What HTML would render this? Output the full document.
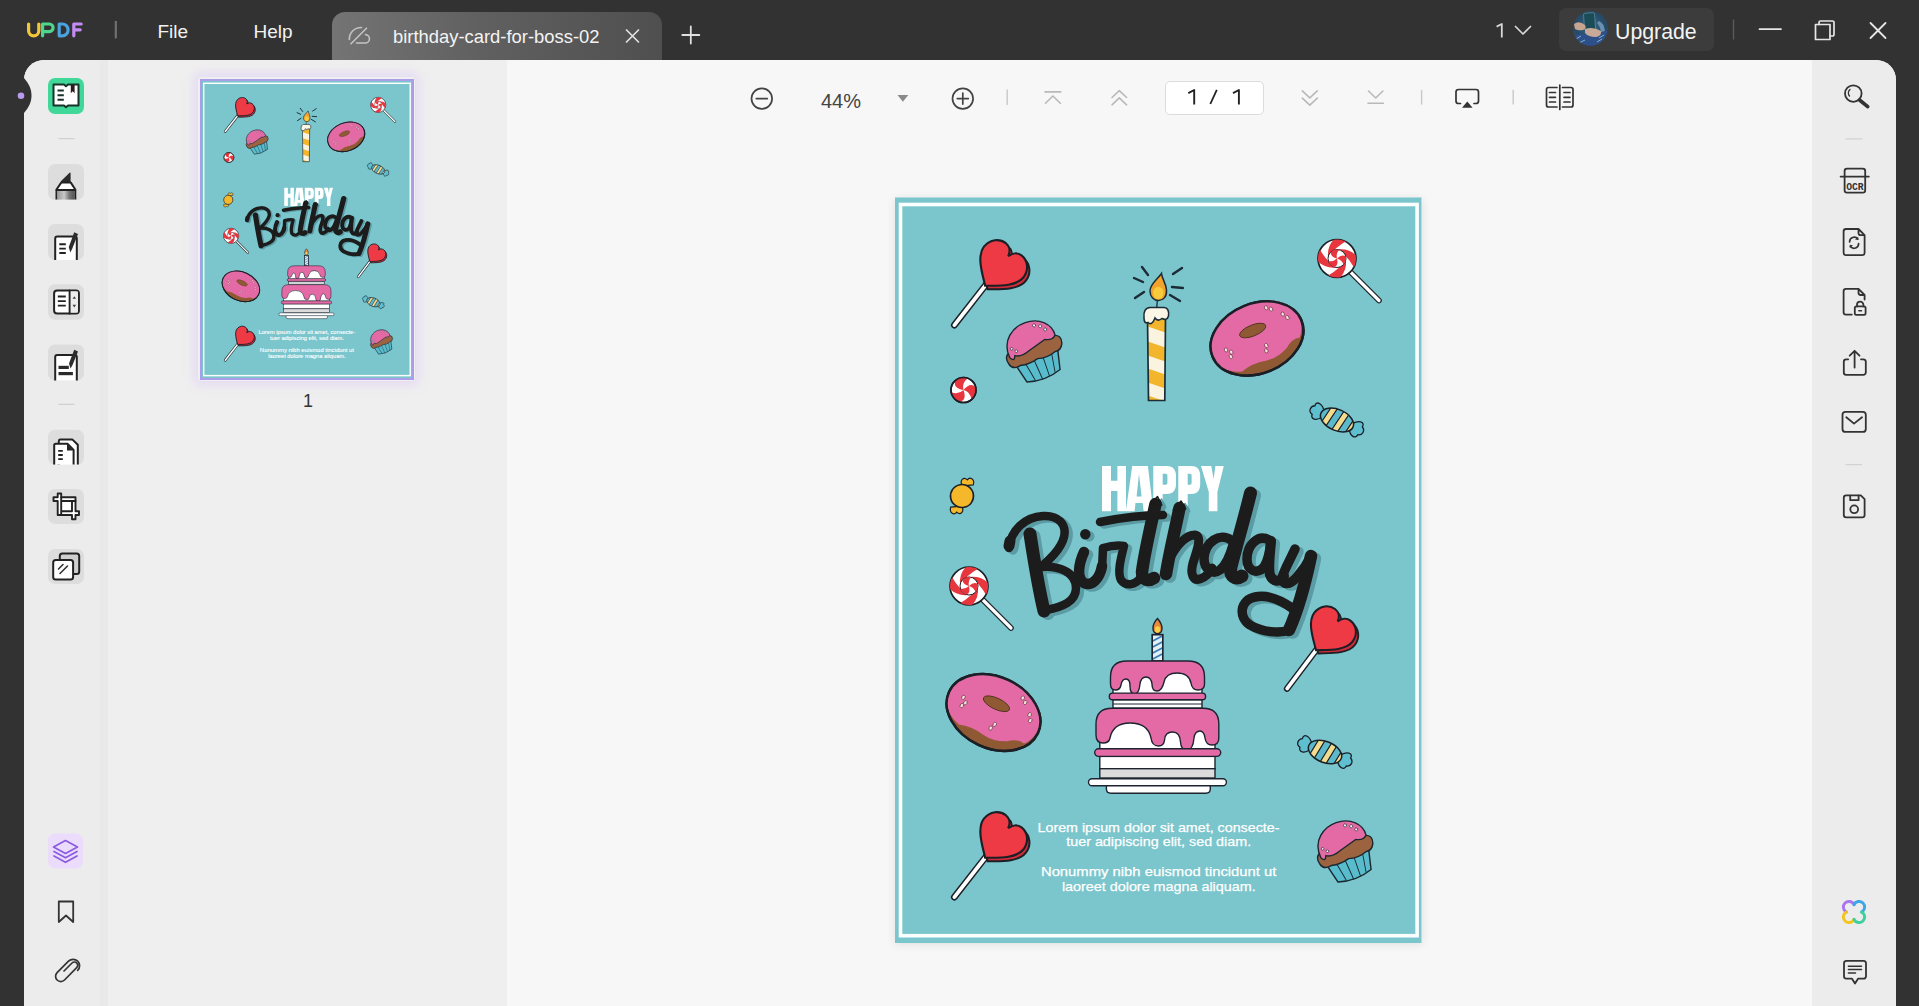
<!DOCTYPE html>
<html><head><meta charset="utf-8">
<style>
*{margin:0;padding:0;box-sizing:border-box}
html,body{width:1919px;height:1006px;overflow:hidden;background:#323232;font-family:"Liberation Sans",sans-serif;position:relative}
.abs{position:absolute}
.t{position:absolute;white-space:nowrap;line-height:1}
#panel{position:absolute;left:24px;top:60px;width:1872px;height:946px;background:#f7f7f7;border-radius:20px 20px 0 0;overflow:hidden}
#lside{position:absolute;left:0;top:0;width:76px;height:946px;background:#ececec}
#lstrip{position:absolute;left:76px;top:0;width:8px;height:946px;background:#e9e9e9}
#thumbs{position:absolute;left:84px;top:0;width:399px;height:946px;background:#efefef}
#rside{position:absolute;left:1788px;top:0;width:84px;height:946px;background:#ececec}
</style></head><body>
<svg width="0" height="0" style="position:absolute">
<defs>
<symbol id="heart" overflow="visible">
  <line x1="0" y1="15" x2="0" y2="58" stroke="#1b1f26" stroke-width="5.4" stroke-linecap="round"/>
  <line x1="0" y1="15" x2="0" y2="58" stroke="#fff" stroke-width="3" stroke-linecap="round"/>
  <path transform="translate(3.2,1)" d="M0,18 C-6,13 -20,4 -20,-6 C-20,-14 -14,-19 -8,-19 C-4,-19 -1,-16 0,-12 C1,-16 4,-19 8,-19 C14,-19 20,-14 20,-6 C20,4 6,13 0,18 Z" fill="#cf2d3a" stroke="#1b1f26" stroke-width="1.6"/>
  <path d="M0,18 C-6,13 -20,4 -20,-6 C-20,-14 -14,-19 -8,-19 C-4,-19 -1,-16 0,-12 C1,-16 4,-19 8,-19 C14,-19 20,-14 20,-6 C20,4 6,13 0,18 Z" fill="#ee3a45" stroke="#1b1f26" stroke-width="1.7"/>
</symbol>
<symbol id="swirl" overflow="visible">
  <line x1="12" y1="12" x2="42" y2="42" stroke="#1b1f26" stroke-width="5.6" stroke-linecap="round"/>
  <line x1="12" y1="12" x2="42" y2="42" stroke="#fff" stroke-width="3.2" stroke-linecap="round"/>
  <circle r="19" fill="#fff" stroke="#1b1f26" stroke-width="1.7"/>
  <g fill="#e8363f">
   <path id="sw1" d="M1,-9 Q12,-10 18.7,-3.3 A19,19 0 0 1 16.9,8.7 Q11,-2 1,-9 Z"/>
   <use href="#sw1" transform="rotate(90)"/><use href="#sw1" transform="rotate(180)"/><use href="#sw1" transform="rotate(270)"/>
  </g>
  <circle r="9" fill="#fff" stroke="#1b1f26" stroke-width="1"/>
  <g fill="#e8363f">
   <path id="sw2" d="M0,0 Q5,-5 8.8,-2 A9,9 0 0 1 6.5,6.2 Q5,1.5 0,0 Z"/>
   <use href="#sw2" transform="rotate(120)"/><use href="#sw2" transform="rotate(240)"/>
  </g>
</symbol>
<symbol id="mint" overflow="visible">
  <circle r="12.5" fill="#fff" stroke="#1b1f26" stroke-width="1.6"/>
  <g fill="#e8363f">
   <path id="mw" d="M0,0 Q8,-9 12.5,-1.5 A12.5,12.5 0 0 1 8,9.6 Q7,2 0,0 Z"/>
   <use href="#mw" transform="rotate(120)"/><use href="#mw" transform="rotate(240)"/>
  </g>
  <circle r="12.5" fill="none" stroke="#1b1f26" stroke-width="1.6"/>
</symbol>
<symbol id="candy" overflow="visible">
  <clipPath id="cclip"><ellipse rx="17.5" ry="10.5"/></clipPath>
  <path d="M-15,-2 C-19,-9 -27,-10 -26,-4 C-30,-2 -30,4 -25,5 C-25,10 -18,10 -15,3 Z" fill="#5dbfd0" stroke="#1b1f26" stroke-width="1.3"/>
  <path d="M15,-2 C19,-9 27,-10 26,-4 C30,-2 30,4 25,5 C25,10 18,10 15,3 Z" fill="#5dbfd0" stroke="#1b1f26" stroke-width="1.3"/>
  <ellipse rx="17.5" ry="10.5" fill="#f4dc8e"/>
  <g clip-path="url(#cclip)" fill="#5cb9cc" stroke="#1b1f26" stroke-width="1.2">
   <path d="M-16,-12 L-10,-12 L-14,12 L-20,12 Z"/>
   <path d="M-4,-12 L3,-12 L-1,12 L-8,12 Z"/>
   <path d="M9,-12 L16,-12 L12,12 L5,12 Z"/>
  </g>
  <ellipse rx="17.5" ry="10.5" fill="none" stroke="#1b1f26" stroke-width="1.5"/>
</symbol>
<symbol id="cupcake" overflow="visible">
  <path d="M-24,6 L25,5 L20,28 Q1,35 -18,29 Z" fill="#58bccd" stroke="#1b2830" stroke-width="1.5"/>
  <path d="M-13,10 L-9,30 M-3,10 L-1,32 M7,10 L7,31 M17,9 L14,29" stroke="#1b2830" stroke-width="1" fill="none"/>
  <path d="M-30,5 Q-33,-5 -25,-7 L25,-9 Q34,-7 31,2 Q28,9 21,8 Q11,12 1,9 Q-9,12 -19,10 Q-28,12 -30,5 Z" fill="#9b6340" stroke="#1b2830" stroke-width="1.5"/>
  <path d="M-27,-2 C-29,-22 -13,-32 1,-32 C17,-32 28,-21 27,-9 Q23,-4 15,-8 Q5,-5 -5,-2 Q-15,2 -21,-2 Q-24,5 -27,-2 Z" fill="#e46aa6" stroke="#1b2830" stroke-width="1.5"/>
  <g fill="#fff" stroke="#1b2830" stroke-width="0.7"><circle cx="9" cy="-26" r="1.6"/><circle cx="15" cy="-23" r="1.6"/><circle cx="19" cy="-18" r="1.6"/><circle cx="-22" cy="-10" r="1.4"/><circle cx="-18" cy="-6" r="1.4"/></g>
</symbol>
<symbol id="donut" overflow="visible">
  <ellipse rx="48" ry="35" fill="#8f5a33" stroke="#1b1f26" stroke-width="2.4"/>
  <path d="M-47,0 C-47,-26 -22,-35 2,-35 C27,-35 47,-22 47,-3 Q46,9 40,15 Q32,13 24,20 Q12,26 0,24 Q-14,21 -26,25 Q-40,21 -46,10 Z" fill="#e46aa6"/>
  <ellipse rx="48" ry="35" fill="none" stroke="#1b1f26" stroke-width="2.4"/>
  <ellipse cx="-1" cy="-9" rx="14" ry="5.5" fill="#8f5a33" stroke="#4a2d1a" stroke-width="0.8"/>
  <g fill="#f6e3d6" stroke="#5a2a40" stroke-width="0.6"><ellipse cx="-33" cy="-1" rx="1.6" ry="2.2"/><ellipse cx="-29" cy="3" rx="1.6" ry="2.2"/><ellipse cx="-31" cy="7" rx="1.6" ry="2.2"/><ellipse cx="20" cy="-25" rx="1.6" ry="2.2"/><ellipse cx="24" cy="-22" rx="1.6" ry="2.2"/><ellipse cx="33" cy="-13" rx="1.6" ry="2.2"/><ellipse cx="36" cy="-8" rx="1.6" ry="2.2"/><ellipse cx="6" cy="10" rx="1.6" ry="2.2"/><ellipse cx="4" cy="15" rx="1.6" ry="2.2"/></g>
</symbol>
<symbol id="ycandy" overflow="visible">
  <path d="M2,-10 C0,-16 5,-19 8,-15 C11,-18 16,-15 13,-9 Z" fill="#f5b82a" stroke="#1b1f26" stroke-width="1.2"/>
  <path d="M-2,10 C0,16 -5,19 -8,15 C-11,18 -16,15 -13,9 Z" fill="#f5b82a" stroke="#1b1f26" stroke-width="1.2"/>
  <circle r="11.5" fill="#f5b82a" stroke="#1b1f26" stroke-width="1.6"/>
</symbol>

  <g id="bday" fill="none" stroke-linecap="round" stroke-linejoin="round">
   <path d="M1009,548 C1011,530 1025,517 1043,516 C1058,515 1067,524 1064,537 C1061,549 1050,559 1041,567" stroke-width="8.5"/>
   <path d="M1009,546 L1010,541" stroke-width="11"/>
   <path d="M1030,534 C1034,560 1039,590 1044,611" stroke-width="13"/>
   <path d="M1041,567 C1058,565 1076,572 1076,588 C1076,602 1062,607 1046,610" stroke-width="8.5"/>
   <path d="M1084,552 C1079,563 1076,578 1084,583 C1092,587 1100,578 1102,566" stroke-width="10.5"/>
   <path d="M1102,570 L1103,548 C1110,546 1117,545 1124,546 C1121,558 1117,572 1121,580 C1126,587 1136,585 1141,577" stroke-width="8.5"/>
   <path d="M1100,522 C1120,518 1145,515 1163,515" stroke-width="8.5"/>
   <path d="M1155.5,504 C1151,525 1144,555 1142,572 C1142,580 1148,582 1154,578" stroke-width="12.5"/>
   <path d="M1149.8,506 L1157.5,496.5 L1161.8,505 Z" stroke-width="1.5"/>
   <path d="M1179.5,508 C1175,530 1169,555 1166,574" stroke-width="12.5"/>
   <path d="M1173.2,510 L1181,501 L1185.7,509 Z" stroke-width="1.5"/>
   <path d="M1168,562 C1176,545 1186,535 1195,535 C1202,536 1198,548 1193,563 C1190,574 1193,581 1200,579 C1206,577 1210,572 1212,568" stroke-width="9"/>
   <path d="M1231,540 C1220,532 1205,542 1204,558 C1204,570 1213,575 1220,570 C1226,565 1230,556 1233,545" stroke-width="9.5"/>
   <path d="M1250.5,493 C1244,520 1235,550 1231,567 C1229,577 1236,580 1242,576" stroke-width="13"/>
   <path d="M1269,540 C1258,534 1247,545 1247,559 C1247,571 1257,575 1264,567 C1268,561 1270,550 1271,541" stroke-width="9.5"/>
   <path d="M1271,541 C1270,555 1268,568 1270,575 C1273,582 1280,583 1284,576" stroke-width="10"/>
   <path d="M1295,549 C1290,560 1283,572 1282,578 C1282,586 1290,585 1297,577 C1303,570 1308,562 1311,556" stroke-width="9.5"/>
   <path d="M1311,556 C1306,580 1298,610 1289,630" stroke-width="12.5"/>
   <path d="M1289,630 C1280,634 1262,632 1250,625 C1238,617 1240,600 1255,597 C1268,594 1282,601 1292,608" stroke-width="9.5"/>
  </g>
<g id="card">
  <rect x="895" y="197.5" width="526.5" height="745.5" fill="#7bc5cc"/>
  <rect x="900.5" y="204.5" width="516.6" height="731.2" fill="none" stroke="#fbffff" stroke-width="3.6"/>
  <!-- top row -->
  <use href="#heart" transform="translate(999,268) rotate(38) scale(1.25)"/>
  <use href="#cupcake" transform="translate(1034,351) rotate(-19) scale(0.93)"/>
  <use href="#mint" transform="translate(963.5,390)"/>
  <use href="#donut" transform="translate(1257,338.5) rotate(-22)"/>
  <use href="#swirl" transform="translate(1337,258.5)"/>
  <use href="#candy" transform="translate(1337,420) rotate(24)"/>
  <use href="#ycandy" transform="translate(962,496) rotate(-10)"/>
  <use href="#swirl" transform="translate(969,586)"/>
  <use href="#heart" transform="translate(1329,633) rotate(37) scale(1.2)"/>
  <use href="#donut" transform="translate(993.5,712.5) rotate(25) scale(1.02)"/>
  <use href="#candy" transform="translate(1325,752) rotate(22)"/>
  <use href="#heart" transform="translate(999,840) rotate(38) scale(1.25)"/>
  <use href="#cupcake" transform="translate(1345,851) rotate(-19) scale(0.93)"/>
  <!-- candle -->
  <g stroke="#1c2c36" stroke-linecap="round">
   <path d="M1142,267 L1148,275 M1134,278 L1143,282 M1135,298 L1144,292 M1173,274 L1182,268 M1172,287 L1183,288 M1170,295 L1180,301" stroke-width="2.4"/>
  </g>
  <clipPath id="cndl"><path d="M1147.5,317 L1165.5,317 L1164.8,400.5 L1148.5,400.5 Z"/></clipPath>
  <path d="M1147.5,317 L1165.5,317 L1164.8,400.5 L1148.5,400.5 Z" fill="#faf3df"/>
  <g clip-path="url(#cndl)" fill="#f2b52b">
   <path d="M1140,318 L1170,318 L1170,334 L1140,324 Z"/>
   <path d="M1140,339 L1170,349 L1170,363 L1140,353 Z"/>
   <path d="M1140,366 L1170,376 L1170,390 L1140,380 Z"/>
   <path d="M1140,393 L1170,403 L1170,410 L1140,410 Z"/>
  </g>
  <path d="M1147.5,317 L1165.5,317 L1164.8,400.5 L1148.5,400.5 Z" fill="none" stroke="#1c2c36" stroke-width="1.7"/>
  <path d="M1144,318 Q1143,308 1150,307.5 L1164,307.5 Q1169.5,308 1168.5,316 Q1167,321 1162,318.5 Q1158,322 1155,318 Q1152,326 1148,322.5 Q1144,324 1144,318 Z" fill="#fbf6e6" stroke="#1c2c36" stroke-width="1.6"/>
  <path d="M1156.8,307 L1157.6,297" stroke="#1c2c36" stroke-width="1.3"/>
  <path d="M1161.5,273.5 C1157,280 1150,284 1150,291 C1150,297 1154,300.5 1158.5,300.5 C1163,300.5 1167,297 1166.5,290 C1166,283 1162,279 1161.5,273.5 Z" fill="#f3a22c" stroke="#1c2c36" stroke-width="1.5"/>
  <ellipse cx="1158.3" cy="293" rx="5.2" ry="6.2" fill="#f7cb3c"/>
  <!-- HAPPY -->
  <path fill="#fff" fill-rule="evenodd" d="M1102,466 H1111 V480.8 H1117.4 V466 H1126 V511.3 H1117.4 V491 H1111 V511.3 H1102 Z
M1132.2,466 H1147.9 L1153.3,511.3 H1143.6 L1142.7,503 H1135.5 L1134.6,511.3 H1125.8 Z M1139,474 L1136.6,496.4 H1141.6 Z
M1153.3,466 H1167 C1173,466 1176,470 1176,476 V484 C1176,490 1173,494 1167,494 H1162.7 V511.3 H1153.3 Z M1162.7,473.8 H1165.5 C1167,473.8 1167.4,474.5 1167.4,476 V482.5 C1167.4,484 1167,484.7 1165.5,484.7 H1162.7 Z
M1178.3,466 H1191.5 C1197.5,466 1200.2,470 1200.2,476 V484 C1200.2,490 1197.5,494 1191.5,494 H1187.7 V511.3 H1178.3 Z M1187.7,473.8 H1190 C1191.2,473.8 1191.6,474.5 1191.6,476 V482.5 C1191.6,484 1191.2,484.7 1190,484.7 H1187.7 Z
M1201,466 H1211.3 L1213.6,479 L1215.4,466 H1223.8 L1217.4,492 V511.3 H1208.8 V492 Z"/>
  <!-- Birthday -->
  <use href="#bday" stroke="#5b9ba4" transform="translate(4,2.5)"/>
  <use href="#bday" stroke="#1c1c1c"/>
  <g>
   <circle cx="1089.3" cy="536.3" r="5.2" fill="#5b9ba4"/><circle cx="1085.3" cy="534.3" r="5.2" fill="#1c1c1c"/>
  </g>
  <!-- cake -->
  <g stroke="#1d2430" stroke-width="1.4">
   <rect x="1152.3" y="634.6" width="10.4" height="26.4" fill="#dff0f8"/>
   <path d="M1152.8,641 L1162.2,636 M1152.8,647 L1162.2,642 M1152.8,653 L1162.2,648 M1152.8,659 L1162.2,654" stroke="#3a7fb3" stroke-width="1.8"/>
   <rect x="1152.3" y="634.6" width="10.4" height="26.4" fill="none"/>
   <path d="M1157.5,618.5 C1154,622 1153,625 1153,628.5 C1153,631.5 1155,633.6 1157.5,633.6 C1160,633.6 1162,631.5 1162,628.5 C1162,625 1160.5,622 1157.5,618.5 Z" fill="#e88a3a"/>
   <ellipse cx="1157.5" cy="629.5" rx="2.5" ry="3.2" fill="#f7d24a" stroke="none"/>
   <rect x="1113" y="672" width="89" height="22" fill="#fff"/>
   <path d="M1110.5,684 V677 Q1110.5,661 1127,661 H1188 Q1204.5,661 1204.5,677 V684 Q1204.5,690 1198,690 Q1192,690 1191,683 Q1189,673 1177,673 Q1166,673 1164,682 Q1162,691 1157,691 Q1152,691 1152,684 Q1151,677 1146,677 Q1141,677 1140,684 Q1139,694 1134.5,694 Q1130,694 1130,686 Q1130,679 1126,679 Q1122,679 1121,685 Q1120,690 1115.5,690 Q1110.5,690 1110.5,684 Z" fill="#e46aa6"/>
   <rect x="1113" y="699.7" width="89" height="8.5" fill="#fff"/>
   <line x1="1113" y1="704" x2="1202" y2="704" stroke-width="1"/>
   <rect x="1109.3" y="693.1" width="96.3" height="6.6" rx="3.3" fill="#e46aa6"/>
   <rect x="1099.8" y="720" width="115.2" height="29" fill="#fff"/>
   <path d="M1096,735 V724 Q1096,708.2 1112,708.2 H1203 Q1218.8,708.2 1218.8,724 V738 Q1218.8,745 1212,745 Q1206,745 1205,738 Q1204,731 1200,731 Q1195,731 1194,738 Q1193,750 1187,750 Q1181,750 1180.5,742 Q1180,732 1172.5,732 Q1165,732 1164.5,740 Q1164,746 1158.5,746 Q1152,746 1151,738 Q1148,723 1130,723 Q1113,723 1110,738 Q1109,743 1103,743 Q1096,743 1096,735 Z" fill="#e46aa6"/>
   <rect x="1099.8" y="756.4" width="115.2" height="12.3" fill="#fff"/>
   <rect x="1099.8" y="768.7" width="115.2" height="9.3" fill="#dcdcdc"/>
   <rect x="1094.7" y="748.8" width="126" height="7.6" rx="3.8" fill="#e46aa6"/>
   <path d="M1106.4,785.7 V789 Q1106.4,793.2 1111,793.2 H1205.7 Q1210.3,793.2 1210.3,789 V785.7" fill="#fff"/>
   <rect x="1088.5" y="778.7" width="137.9" height="7" rx="3.5" fill="#fff"/>
  </g>
  <!-- text -->
  <g font-family="Liberation Sans" font-size="13.6" fill="#fff" stroke="#fff" stroke-width="0.25" text-anchor="middle">
   <text x="1158.5" y="832" textLength="242" lengthAdjust="spacingAndGlyphs">Lorem ipsum dolor sit amet, consecte-</text>
   <text x="1158.7" y="846.3" textLength="185" lengthAdjust="spacingAndGlyphs">tuer adipiscing elit, sed diam.</text>
   <text x="1158.7" y="876.2" textLength="235.5" lengthAdjust="spacingAndGlyphs">Nonummy nibh euismod tincidunt ut</text>
   <text x="1158.8" y="891" textLength="193.8" lengthAdjust="spacingAndGlyphs">laoreet dolore magna aliquam.</text>
  </g>
</g>
</defs>
</svg>
<!-- title bar -->
<div class="t" style="left:157.5px;top:22px;font-size:19px;color:#f2f2f2">File</div>
<div class="t" style="left:253.5px;top:22px;font-size:19px;color:#f2f2f2">Help</div>
<div class="abs" style="left:115px;top:21px;width:2px;height:17px;background:#6a6a6a"></div>
<!-- tab -->
<div class="abs" style="left:332px;top:12px;width:330px;height:48px;border-radius:13px 13px 0 0;background:linear-gradient(90deg,#747474 0%,#606060 45%,#4f4f4f 100%)"></div>
<div class="t" style="left:393px;top:28px;font-size:18.4px;color:#f4f4f4">birthday-card-for-boss-02</div>

<div id="panel">
  <div id="lside"></div>
  <div id="lstrip"></div>
  <div id="thumbs"></div>
  <div id="rside"></div>
</div>

<div class="abs" style="left:895px;top:197.5px;width:526.5px;height:745.5px;box-shadow:0 1px 9px rgba(0,0,0,0.10)"></div>
<svg class="abs" style="left:895px;top:197px" width="527" height="746" viewBox="895 197 527 746"><use href="#card"/></svg>
<div class="abs" style="left:198px;top:77px;width:217px;height:304px;border-radius:4px;box-shadow:0 0 10px 5px rgba(222,205,245,0.55)"></div>
<div class="abs" style="left:200px;top:79px;width:213.4px;height:300.4px;background:#7bc5cc"></div>
<svg class="abs" style="left:201px;top:80px" width="212" height="299" viewBox="893.75 196.25 530.25 747.9"><use href="#card"/></svg>
<div class="abs" style="left:200px;top:79px;width:213.6px;height:300.6px;border:2px solid #ad9cea"></div>
<div class="t" style="left:303px;top:392px;font-size:18px;color:#333">1</div>

<svg class="abs" style="left:0;top:0" width="1919" height="1006" viewBox="0 0 1919 1006" fill="none" stroke-linecap="round" stroke-linejoin="round">
<!-- left notch -->
<path d="M24,78 C29,84 31.5,89 31.5,95.5 C31.5,102 29,107 24,113 Z" fill="#323232"/>
<circle cx="21" cy="95.7" r="3.3" fill="#b89af0"/>
<!-- UPDF logo -->
<g stroke-width="3.2">
<path d="M28.6,24 V30.7 A5.1,5.1 0 0 0 38.8,30.7 V24" stroke="#f2c73a"/>
<path d="M42.6,35.8 V24 H49.3 A3.8,3.8 0 0 1 49.3,31.6 H42.6" stroke="#4fd68e"/>
<path d="M59.2,24 V35.8 H62.2 A5.9,5.9 0 0 0 62.2,24 Z" stroke="#4aa2df"/>
<path d="M81.2,24 H73.8 V35.8 M73.8,29.8 H80.2" stroke="#c28cf4"/>
</g>
<line x1="115.5" y1="21.5" x2="115.5" y2="38" stroke="#6e6e6e" stroke-width="1.6"/>
<!-- tab icon -->
<g stroke="#c4c4c4" stroke-width="1.6">
<path d="M349.3,39.5 C349.3,33 354,27.5 361.5,27.5"/>
<path d="M356.5,43 H365 A4.2,4.2 0 0 0 365.5,34.6"/>
<path d="M351,43.7 L366.5,28.2"/>
</g>
<!-- tab close -->
<path d="M626.5,30 L638.5,42 M638.5,30 L626.5,42" stroke="#e0e0e0" stroke-width="1.7"/>
<!-- plus -->
<path d="M690.8,26.5 V43.5 M682.3,35 H699.3" stroke="#e0e0e0" stroke-width="1.8"/>
<!-- right title -->
<path d="M1515.5,26.5 L1523,34 L1530.5,26.5" stroke="#d8d8d8" stroke-width="1.7"/>
<line x1="1733.5" y1="20" x2="1733.5" y2="39" stroke="#5a5a5a" stroke-width="1.4"/>
<line x1="1759.5" y1="29.2" x2="1781" y2="29.2" stroke="#e6e6e6" stroke-width="1.7"/>
<path d="M1815.5,24.5 H1830 V39.5 H1815.5 Z" stroke="#e6e6e6" stroke-width="1.7"/>
<path d="M1819,24.5 V22.5 A1.5,1.5 0 0 1 1820.5,21 H1832.5 A1.5,1.5 0 0 1 1834,22.5 V34.5 A1.5,1.5 0 0 1 1832.5,36 H1830" stroke="#e6e6e6" stroke-width="1.7"/>
<path d="M1870.5,23 L1885.5,38 M1885.5,23 L1870.5,38" stroke="#e6e6e6" stroke-width="1.8"/>
</svg>

<div class="abs" style="left:1559px;top:8px;width:155px;height:43px;border-radius:7px;background:#3c3c3c"></div>
<svg class="abs" style="left:1573px;top:11px" width="35" height="35" viewBox="0 0 35 35">
<defs><clipPath id="avc"><circle cx="17.5" cy="17.5" r="17.2"/></clipPath>
<radialGradient id="avg" cx="0.5" cy="0.45" r="0.6"><stop offset="0" stop-color="#3c6a86"/><stop offset="0.7" stop-color="#244a66"/><stop offset="1" stop-color="#3a4f6a"/></radialGradient></defs>
<g clip-path="url(#avc)">
<rect width="35" height="35" fill="url(#avg)"/>
<path d="M0,24 L35,20 V35 H0 Z" fill="#2d4f8a"/>
<path d="M3,28 L8,25 M6,32 L12,29 M26,27 L31,24 M24,31 L29,28" stroke="#7fb6c8" stroke-width="1" />
<rect x="11" y="2" width="11" height="17" rx="1.5" fill="#1c4b58" stroke="#5c8898" stroke-width="0.8" transform="rotate(-4 16 10)"/>
<path d="M1,13 Q6,9 12,14 Q14,18 10,19 Q5,20 2,18 Z" fill="#c9a48f"/>
<path d="M12,18 Q20,15 28,20 Q29,25 23,26 Q15,26 12,22 Z" fill="#c8a999"/>
<path d="M26,10 Q31,12 32,20 L28,21 Q27,15 24,12 Z" fill="#6b8fb0"/>
</g>
</svg><div class="t" style="left:1615px;top:22.2px;font-size:21.3px;color:#f4f4f4">Upgrade</div>
<svg class="abs" style="left:1480px;top:0" width="40" height="60"><path d="M16.6,26.6 L21.8,24 V37.6" stroke="#d8d8d8" stroke-width="1.8" fill="none" stroke-linejoin="round"/></svg>

<!-- toolbar -->
<svg class="abs" style="left:0;top:0" width="1919" height="1006" viewBox="0 0 1919 1006" fill="none" stroke-linecap="round" stroke-linejoin="round">
<g stroke="#444" stroke-width="1.7">
<circle cx="761.8" cy="98.6" r="10.3"/>
<line x1="756.3" y1="98.6" x2="767.3" y2="98.6"/>
<circle cx="962.8" cy="98.6" r="10.3"/>
<path d="M957.3,98.6 H968.3 M962.8,93.1 V104.1"/>
</g>
<path d="M897.5,95 H908.3 L902.9,101.8 Z" fill="#8a8a8a"/>
<g stroke="#c8c8c8" stroke-width="1.4">
<line x1="1007.2" y1="90" x2="1007.2" y2="104.4"/>
<line x1="1421.6" y1="90.5" x2="1421.6" y2="104"/>
<line x1="1513.2" y1="90.5" x2="1513.2" y2="104"/>
</g>
<g stroke="#b9b9b9" stroke-width="1.6">
<path d="M1045,91.9 H1060.8 M1045.5,103.3 L1052.9,96 L1060.3,103.3"/>
<path d="M1112,97.5 L1119.3,90.6 L1126.6,97.5 M1112,104.8 L1119.3,97.9 L1126.6,104.8"/>
<path d="M1302.3,90.9 L1309.8,97.8 L1317.3,90.9 M1302.3,98.2 L1309.8,105.1 L1317.3,98.2"/>
<path d="M1368,103.2 H1383.4 M1368.5,91 L1375.7,98 L1382.9,91"/>
</g>
<g stroke="#333" stroke-width="1.7">
<path d="M1460.5,103.5 H1458.5 A2.5,2.5 0 0 1 1456,101 V92 A2.5,2.5 0 0 1 1458.5,89.5 H1476 A2.5,2.5 0 0 1 1478.5,92 V101 A2.5,2.5 0 0 1 1476,103.5 H1474"/>
</g>
<path d="M1462,107.8 L1467.3,101.5 L1472.6,107.8 Z" fill="#333"/>
<g stroke="#333" stroke-width="1.7">
<path d="M1559.8,85 V109.5"/>
<path d="M1557,87.5 H1548.5 A2,2 0 0 0 1546.5,89.5 V105 A2,2 0 0 0 1548.5,107 H1557 M1562.5,87.5 H1571 A2,2 0 0 1 1573,89.5 V105 A2,2 0 0 1 1571,107 H1562.5"/>
<path d="M1549.5,92.5 H1555.5 M1549.5,97.3 H1555.5 M1549.5,102 H1555.5 M1564,92.5 H1570 M1564,97.3 H1570 M1564,102 H1570"/>
</g>
</svg>
<div class="abs" style="left:1164.5px;top:80.5px;width:99px;height:34px;background:#fff;border:1px solid #dcdcdc;border-radius:5px"></div>
<div class="t" style="left:821px;top:90.5px;font-size:20px;color:#444">44%</div>
<svg class="abs" style="left:0;top:0" width="1919" height="130"><path d="M1188.3,93.2 L1194.2,90 V104.6 M1233,93.2 L1238.9,90 V104.6" stroke="#222" stroke-width="1.9" fill="none" stroke-linejoin="round"/></svg>
<svg class="abs" style="left:0;top:0" width="1919" height="130"><line x1="1210.3" y1="104" x2="1216.8" y2="89.8" stroke="#222" stroke-width="1.8"/></svg>

<!-- sidebars -->
<svg class="abs" style="left:0;top:0" width="1919" height="1006" viewBox="0 0 1919 1006" fill="none" stroke-linecap="round" stroke-linejoin="round">
<rect x="48" y="78" width="36" height="36" rx="7" fill="#40d898"/>
<path d="M53.5,84.5 H64 L66,86.3 L68,84.5 H78.5 V105.5 H68 L66,107.3 L64,105.5 H53.5 Z" fill="#fff" stroke="#17332a" stroke-width="2"/>
<path d="M57.5,90.6 H63.8 M57.5,95.3 H63.8 M57.5,99.8 H63.8" stroke="#17332a" stroke-width="2" stroke-linecap="butt"/>
<path d="M70.8,85 V93.2 L72.7,91.2 L74.6,93.2 V85 Z" fill="#2a1a1a"/>
<line x1="59" y1="138.6" x2="74" y2="138.6" stroke="#cfcfcf" stroke-width="1.3"/>
<line x1="59" y1="404.3" x2="74" y2="404.3" stroke="#cfcfcf" stroke-width="1.3"/>
<g fill="#dddddd">
<rect x="48" y="164" width="36" height="36" rx="7"/>
<rect x="48" y="224" width="36" height="36" rx="7"/>
<rect x="48" y="284.2" width="36" height="35.5" rx="7"/>
<rect x="48" y="344.5" width="36" height="36" rx="7"/>
<rect x="48" y="429.8" width="36" height="35" rx="7"/>
<rect x="48" y="489" width="36" height="35" rx="7"/>
<rect x="48" y="549" width="36" height="35" rx="7"/>
</g>
<rect x="48" y="833.5" width="35" height="35" rx="7" fill="#ecdcfb"/>
<!-- highlighter -->
<defs>
<linearGradient id="hg" x1="0" y1="0" x2="1" y2="0"><stop offset="0" stop-color="#9a9a9a"/><stop offset="0.4" stop-color="#c8c8c8"/><stop offset="0.7" stop-color="#777"/><stop offset="1" stop-color="#555"/></linearGradient>
</defs>
<path d="M61.5,181.5 L70,173.2 V182.2 Z" fill="#2b2b2b" stroke="#2b2b2b" stroke-width="1.2"/>
<path d="M56.5,199.6 V189.5 L61.2,182.6 H70.8 L75.3,189.5 V199.6" fill="#fff" stroke="#222" stroke-width="2" stroke-linecap="butt"/>
<rect x="57.5" y="190.6" width="16.8" height="9" fill="url(#hg)"/>
<line x1="56.5" y1="190" x2="75.3" y2="190" stroke="#222" stroke-width="1.8"/>
<!-- edit -->
<path d="M55.2,260 V238.5 A2,2 0 0 1 57.2,236.5 H74.8 A2,2 0 0 1 76.8,238.5 V260" fill="#fff" stroke="#222" stroke-width="2" stroke-linecap="butt"/>
<path d="M59.3,244.3 H65.8 M59.3,248.6 H65.8 M59.3,253 H65.8" stroke="#222" stroke-width="1.9" stroke-linecap="butt"/>
<path d="M74.2,232.3 L78,234 L72.3,248.5 L70.3,252.5 L68.8,247 Z" fill="#2b2b2b"/>
<!-- form -->
<rect x="54.1" y="290.4" width="24.8" height="23.2" rx="3" fill="#fff" stroke="#222" stroke-width="2"/>
<rect x="70.2" y="291.4" width="7.7" height="21.2" fill="#ececec"/>
<line x1="69.6" y1="290.4" x2="69.6" y2="313.6" stroke="#222" stroke-width="1.9"/>
<path d="M57.8,296.5 H65.8 M57.8,301.2 H65.8 M57.8,305.6 H65.8" stroke="#222" stroke-width="1.8" stroke-linecap="butt"/>
<path d="M72.5,298.8 L74.3,296.2 L76.1,298.8 Z M72.5,304.8 L74.3,307.4 L76.1,304.8 Z" fill="#444"/>
<!-- sign -->
<path d="M55.2,380.5 V357 A2,2 0 0 1 57.2,355 H74.8 A2,2 0 0 1 76.8,357 V380.5" fill="#fff" stroke="#222" stroke-width="2" stroke-linecap="butt"/>
<rect x="58.5" y="365.8" width="10.3" height="3.2" fill="#2b2b2b"/>
<rect x="58.5" y="372" width="14.4" height="3.2" fill="#2b2b2b"/>
<path d="M74.2,349.8 L78,351.5 L72.5,365 L70.5,368.5 L69,363.6 Z" fill="#2b2b2b"/>
<!-- pages -->
<path d="M58.8,464.5 V441 A1.5,1.5 0 0 1 60.3,439.6 H72.5 L77.8,444.8 V464.5" fill="#fff" stroke="#222" stroke-width="2" stroke-linecap="butt"/>
<path d="M54.2,464.5 V445.3 A1.5,1.5 0 0 1 55.7,443.8 H67.5 L73.6,449.9 V464.5" fill="#fff" stroke="#222" stroke-width="2" stroke-linecap="butt"/>
<path d="M67,444.3 V450.4 H73.1 Z" fill="#222"/>
<path d="M58.2,450.8 H62.8 M58.2,455 H62.8 M58.2,459.2 H62.8" stroke="#222" stroke-width="1.8" stroke-linecap="butt"/>
<!-- crop -->
<rect x="62" y="502" width="9.5" height="9" fill="#c8c8c8"/>
<path d="M57.7,493.5 H61.2 V497.3 H75.5 V511.2 H79 V515 H75.5 V519.2 H72 V515 H57.7 V501 H53.5 V497.3 H57.7 Z" fill="#fff" stroke="#222" stroke-width="1.9"/>
<path d="M61.2,497.3 V511.2 H72 V501 H61.2 M61.2,511.2 L61.2,515 M72,501 L75.5,501" stroke="#222" stroke-width="1.9"/>
<!-- duplicate -->
<rect x="59.8" y="553.4" width="19.4" height="20.5" rx="2.5" fill="#cfcfcf" stroke="#222" stroke-width="2"/>
<rect x="53.2" y="560" width="19.9" height="19.6" rx="2.5" fill="#fff" stroke="#222" stroke-width="2"/>
<path d="M58.5,569 L63,564.5 M60,573.5 L67.5,566" stroke="#333" stroke-width="1.6"/>
<!-- layers -->
<g stroke="#8a5be0" stroke-width="1.7">
<path d="M65.5,840.5 L77.5,847 L65.5,853.5 L53.5,847 Z"/>
<path d="M54,851.5 L65.5,857.8 L77,851.5"/>
<path d="M54,856 L65.5,862.3 L77,856"/>
</g>
<!-- bookmark -->
<path d="M58.8,901.5 H73.2 V922 L66,915.5 L58.8,922 Z" stroke="#333" stroke-width="1.8"/>
<!-- clip -->
<path d="M64,971 L72,963 A3.3,3.3 0 0 1 76.7,967.7 L64.5,980 A5.2,5.2 0 0 1 57.1,972.6 L68.5,961.2 A6.5,6.5 0 0 1 77.7,970.4" stroke="#333" stroke-width="1.7"/>

<!-- right sidebar -->
<g stroke="#333" stroke-width="1.8">
<circle cx="1853.3" cy="93.6" r="8.3"/>
<path d="M1850,89.5 A4.5,4.5 0 0 0 1849.5,96" stroke-width="1.3"/>
</g>
<path d="M1859.5,100 L1867.7,106.6" stroke="#333" stroke-width="3.6" stroke-linecap="round"/>
<line x1="1846" y1="138.8" x2="1862" y2="138.8" stroke="#d2d2d2" stroke-width="1.3"/>
<line x1="1846" y1="464.6" x2="1861.5" y2="464.6" stroke="#d2d2d2" stroke-width="1.3"/>
<g stroke="#333" stroke-width="1.8">
<!-- OCR -->
<path d="M1844.6,176.6 V171 A2.4,2.4 0 0 1 1847,168.6 H1862.8 A2.4,2.4 0 0 1 1865.2,171 V176.6"/>
<path d="M1840.6,176.6 H1868.8"/>
<path d="M1844.6,176.6 V190.3 A2.4,2.4 0 0 0 1847,192.7 H1862.8 A2.4,2.4 0 0 0 1865.2,190.3 V176.6"/>
<!-- convert -->
<path d="M1858.5,229 H1846 A2.4,2.4 0 0 0 1843.6,231.4 V252.8 A2.4,2.4 0 0 0 1846,255.2 H1862.2 A2.4,2.4 0 0 0 1864.6,252.8 V235.2 Z M1858.5,229 V233 A2.2,2.2 0 0 0 1860.7,235.2 H1864.6"/>
<path d="M1849.6,242 A4.6,4.6 0 0 1 1857.8,239" stroke-width="1.7"/>
<path d="M1858.6,243.5 A4.6,4.6 0 0 1 1850.4,246.5" stroke-width="1.7"/>
<!-- protect -->
<path d="M1851.8,314.6 H1846 A2.4,2.4 0 0 1 1843.6,312.2 V291.2 A2.4,2.4 0 0 1 1846,288.8 H1858.5 L1864.6,295 V299.5 M1858.5,288.8 V292.8 A2.2,2.2 0 0 0 1860.7,295 H1864.6"/>
<rect x="1854.8" y="306.4" width="10.8" height="8.4" rx="1.6"/>
<path d="M1857,306.4 V304.8 A3.2,3.2 0 0 1 1863.4,304.8 V306.4"/>
<line x1="1858.8" y1="310.7" x2="1861.5" y2="310.7" stroke-width="1.5"/>
<!-- share -->
<path d="M1848.2,359.3 H1846.2 A2.4,2.4 0 0 0 1843.8,361.7 V372.5 A2.4,2.4 0 0 0 1846.2,374.9 H1863.4 A2.4,2.4 0 0 0 1865.8,372.5 V361.7 A2.4,2.4 0 0 0 1863.4,359.3 H1861"/>
<path d="M1854.6,367.6 V351 M1849.7,355.7 L1854.6,350.8 L1859.5,355.7"/>
<!-- mail -->
<rect x="1842.5" y="411.8" width="23.3" height="20.1" rx="3"/>
<path d="M1846.3,417.3 L1854,423.6 L1862,417.3"/>
<!-- save -->
<path d="M1846.2,495.4 H1860.8 L1864.6,499.2 V515 A2.4,2.4 0 0 1 1862.2,517.4 H1846.2 A2.4,2.4 0 0 1 1843.8,515 V497.8 A2.4,2.4 0 0 1 1846.2,495.4 Z"/>
<path d="M1850.2,495.6 V500.2 H1858.6 V495.6"/>
<circle cx="1854.2" cy="509.3" r="3.9"/>
<!-- comment -->
<path d="M1846.4,960.8 H1863.6 A2.4,2.4 0 0 1 1866,963.2 V976.3 A2.4,2.4 0 0 1 1863.6,978.7 H1858 L1855,983.5 L1852,978.7 H1846.4 A2.4,2.4 0 0 1 1844,976.3 V963.2 A2.4,2.4 0 0 1 1846.4,960.8 Z"/>
<path d="M1848.4,966.3 H1861.5 M1848.4,969.6 H1861.5 M1848.4,972.9 H1855.5" stroke-width="1.5"/>
</g>
<text x="1854.9" y="189.5" text-anchor="middle" font-family="Liberation Mono" font-weight="bold" font-size="10.5" fill="#333" textLength="17.5" lengthAdjust="spacingAndGlyphs">OCR</text>
<path d="M1858.2,236.8 L1858.2,240 L1855,239.6 Z M1849.8,248 L1849.8,244.8 L1853,245.3 Z" fill="#333"/>
<!-- AI -->
<g stroke-width="3" fill="none">
<path d="M1854,904.6 A5.6,5.6 0 1 0 1846.4,912" stroke="#a877f0"/>
<path d="M1854,904.6 A5.6,5.6 0 1 1 1861.6,912" stroke="#3aa7e6"/>
<path d="M1846.4,912 A5.6,5.6 0 1 0 1854,919.4" stroke="#f3c51c"/>
<path d="M1861.6,912 A5.6,5.6 0 1 1 1854,919.4" stroke="#3dcf9c"/>
</g>
</svg>
</body></html>
